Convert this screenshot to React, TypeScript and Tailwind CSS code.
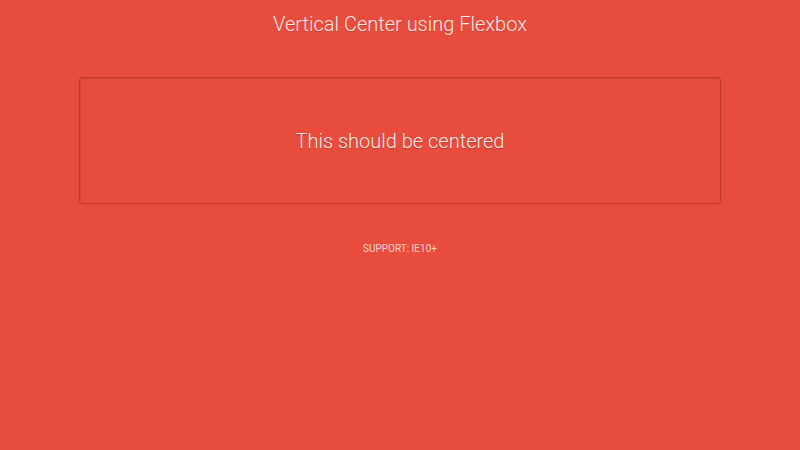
export default function App() {
  return (
    <div
      className="min-h-[450px] w-full bg-[#e74c3c] text-[#fbe9e7] flex flex-col items-center"
      style={{ fontFamily: "Roboto, 'Liberation Sans', sans-serif" }}
    >
      <h1 className="mt-[11px] text-[20px] leading-[26px] font-light [text-shadow:0_1px_1px_rgba(0,0,0,0.12)]">
        Vertical Center using Flexbox
      </h1>
      <div className="mt-[40px] w-[642px] h-[127px] border border-[#c0392b] rounded-[3px] shadow-[inset_1px_1px_1px_rgba(0,0,0,0.08)] flex items-center justify-center">
        <p className="text-[20px] font-light [text-shadow:0_1px_1px_rgba(0,0,0,0.2)]">
          This should be centered
        </p>
      </div>
      <p className="mt-[38px] text-[10px] leading-[14px] uppercase text-[#f6d3cf]">Support: IE10+</p>
    </div>
  );
}
